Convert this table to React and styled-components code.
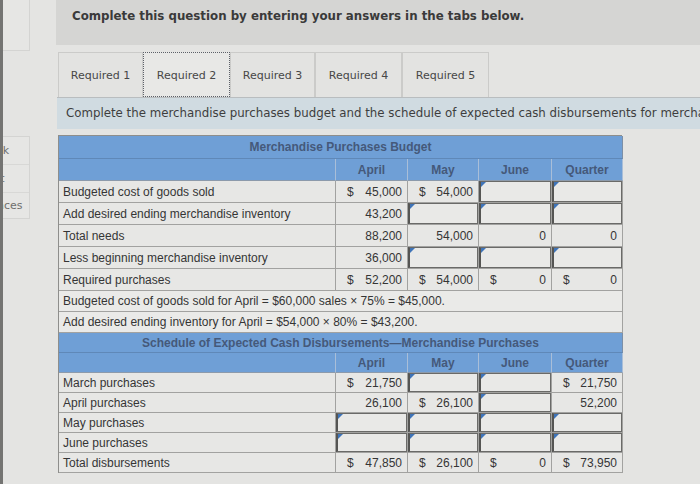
import React from "react";
import styled, { createGlobalStyle } from "styled-components";

const Global = createGlobalStyle`
  html, body { margin: 0; padding: 0; }
  body {
    width: 700px;
    height: 484px;
    overflow: hidden;
    background: #e4e4e2;
    font-family: "DejaVu Sans", "Liberation Sans", sans-serif;
  }
`;

const Page = styled.div`
  display: flex;
  height: 484px;
  box-sizing: border-box;
  border-left: 3px solid #747472;
  overflow: hidden;
`;

const Sidebar = styled.div`
  flex: none;
  width: 53px;
  display: flex;
  flex-direction: column;
  gap: 85px;
`;

const SideBox = styled.div`
  margin-left: -49px;
  width: 76px;
  box-sizing: border-box;
  border: 1px solid #d4d4d2;
  border-top: ${(p) => (p.$open ? "none" : "1px solid #d4d4d2")};
  background: #e6e6e4;
`;

const SideItem = styled.div`
  height: ${(p) => p.$h || 26}px;
  line-height: ${(p) => p.$h || 26}px;
  text-align: center;
  font-size: 11px;
  color: #6f6f6d;
  border-bottom: 1px solid #d8d8d6;
  &:last-child { border-bottom: none; }
`;

const Main = styled.div`
  flex: 1;
  min-width: 0;
  display: flex;
  flex-direction: column;
  overflow: hidden;
`;

const Header = styled.div`
  height: 45px;
  box-sizing: border-box;
  padding: 9px 0 0 16px;
  background: #d5d5d3;
  font-weight: bold;
  font-size: 11.8px;
  line-height: 14px;
  color: #3a3a3a;
  white-space: nowrap;
`;

const Tabs = styled.div`
  display: flex;
  margin: 7px 0 0 2px;
  height: 45px;
`;

const Tab = styled.div`
  width: ${(p) => p.$w}px;
  box-sizing: border-box;
  display: flex;
  align-items: center;
  justify-content: center;
  background: ${(p) => (p.$active ? "#e8e8e6" : "#e3e3e1")};
  border: ${(p) => (p.$active ? "1px dotted #5c6068" : "1px solid #cbcbc9")};
  border-bottom: ${(p) => (p.$active ? "1px dotted #5c6068" : "none")};
  font-size: 11px;
  color: #474747;
  padding-top: 1px;
`;

const Band = styled.div`
  margin-left: 1px;
  height: 32px;
  box-sizing: border-box;
  border-top: 1px solid #b9bdbf;
  padding-left: 9px;
  background: #d0dbe1;
  font-size: 11.8px;
  line-height: 31px;
  color: #3e3e3e;
  white-space: nowrap;
`;

const Sheet = styled.div`
  margin: 6px 0 0 2px;
  width: 564px;
  box-sizing: border-box;
  display: grid;
  grid-template-columns: 277px 72px 71px 73px 71px;
  grid-template-rows: 23px 22px repeat(5, 22px) 21px 21px 20px 20px repeat(5, 20px);
  border-left: 1px solid #8e8e8c;
  border-top: 1px solid #8e8e8c;
  font-family: "Liberation Sans", Arial, sans-serif;
  font-size: 12px;
`;

const HeadCell = styled.div`
  grid-column: ${(p) => (p.$span ? "1 / -1" : "auto")};
  box-sizing: border-box;
  background: #6f9fd6;
  color: #45597a;
  font-weight: bold;
  display: flex;
  align-items: center;
  justify-content: center;
  border-right: 1px solid ${(p) => (p.$span ? "#7c8fa6" : "#a9bed8")};
  border-bottom: 1px solid ${(p) => (p.$span ? "#5f88b8" : "#8c9aab")};
`;

const Cell = styled.div`
  box-sizing: border-box;
  background: #e7e7e5;
  color: #353535;
  display: flex;
  align-items: center;
  border-right: 1px solid #a2a2a0;
  border-bottom: 1px solid #a2a2a0;
  min-width: 0;
`;

const LabelCell = styled(Cell)`
  padding-left: 4px;
  white-space: nowrap;
`;

const NoteCell = styled(Cell)`
  grid-column: 1 / -1;
  padding-left: 4px;
  background: #eaeae8;
  white-space: nowrap;
`;

const MoneyCell = styled(Cell)`
  justify-content: ${(p) => (p.$dollar ? "space-between" : "flex-end")};
  padding: 0 5px 0 11px;
`;

const InputCell = styled(Cell)`
  align-items: stretch;
`;

const InputBox = styled.div`
  flex: 1;
  position: relative;
  border: 1px solid #6a6a68;
  border-left: 2px solid #555553;
  background: #e9e9e7;
  &::before {
    content: "";
    position: absolute;
    top: 0;
    left: 0;
    width: 0;
    height: 0;
    border-top: 5px solid #3f74b8;
    border-right: 5px solid transparent;
  }
`;

const months = ["April", "May", "June", "Quarter"];

const budgetRows = [
  ["Budgeted cost of goods sold", ["$45,000", "$54,000", null, null]],
  ["Add desired ending merchandise inventory", ["43,200", null, null, null]],
  ["Total needs", ["88,200", "54,000", "0", "0"]],
  ["Less beginning merchandise inventory", ["36,000", null, null, null]],
  ["Required purchases", ["$52,200", "$54,000", "$0", "$0"]],
];

const notes = [
  "Budgeted cost of goods sold for April = $60,000 sales \u00d7 75% = $45,000.",
  "Add desired ending inventory for April = $54,000 \u00d7 80% = $43,200.",
];

const scheduleRows = [
  ["March purchases", ["$21,750", null, null, "$21,750"]],
  ["April purchases", ["26,100", "$26,100", null, "52,200"]],
  ["May purchases", [null, null, null, null]],
  ["June purchases", [null, null, null, null]],
  ["Total disbursements", ["$47,850", "$26,100", "$0", "$73,950"]],
];

function Value({ v }) {
  if (v === null) {
    return (
      <InputCell>
        <InputBox />
      </InputCell>
    );
  }
  const dollar = v.startsWith("$");
  return (
    <MoneyCell $dollar={dollar}>
      {dollar && <span>$</span>}
      <span>{dollar ? v.slice(1) : v}</span>
    </MoneyCell>
  );
}

function Section({ title, rows }) {
  return (
    <>
      <HeadCell $span>{title}</HeadCell>
      <HeadCell />
      {months.map((m) => (
        <HeadCell key={m}>{m}</HeadCell>
      ))}
      {rows.map(([label, vals]) => (
        <React.Fragment key={label}>
          <LabelCell>{label}</LabelCell>
          {vals.map((v, i) => (
            <Value key={i} v={v} />
          ))}
        </React.Fragment>
      ))}
    </>
  );
}

export default function App() {
  const tabs = [
    ["Required 1", 85],
    ["Required 2", 87],
    ["Required 3", 85],
    ["Required 4", 87],
    ["Required 5", 87],
  ];
  return (
    <>
      <Global />
      <Page>
        <Sidebar>
          <SideBox $open>
            <SideItem $h={50} />
          </SideBox>
          <SideBox>
            <SideItem $h={27}>eBook</SideItem>
            <SideItem $h={27}>Print</SideItem>
            <SideItem $h={25}>References</SideItem>
          </SideBox>
        </Sidebar>
        <Main>
          <Header>Complete this question by entering your answers in the tabs below.</Header>
          <Tabs>
            {tabs.map(([t, w]) => (
              <Tab key={t} $w={w} $active={t === "Required 2"}>
                {t}
              </Tab>
            ))}
          </Tabs>
          <Band>
            Complete the merchandise purchases budget and the schedule of expected cash disbursements for merchandise purchases.
          </Band>
          <Sheet>
            <Section title="Merchandise Purchases Budget" rows={budgetRows} />
            {notes.map((n) => (
              <NoteCell key={n}>{n}</NoteCell>
            ))}
            <Section
              title={"Schedule of Expected Cash Disbursements\u2014Merchandise Purchases"}
              rows={scheduleRows}
            />
          </Sheet>
        </Main>
      </Page>
    </>
  );
}
